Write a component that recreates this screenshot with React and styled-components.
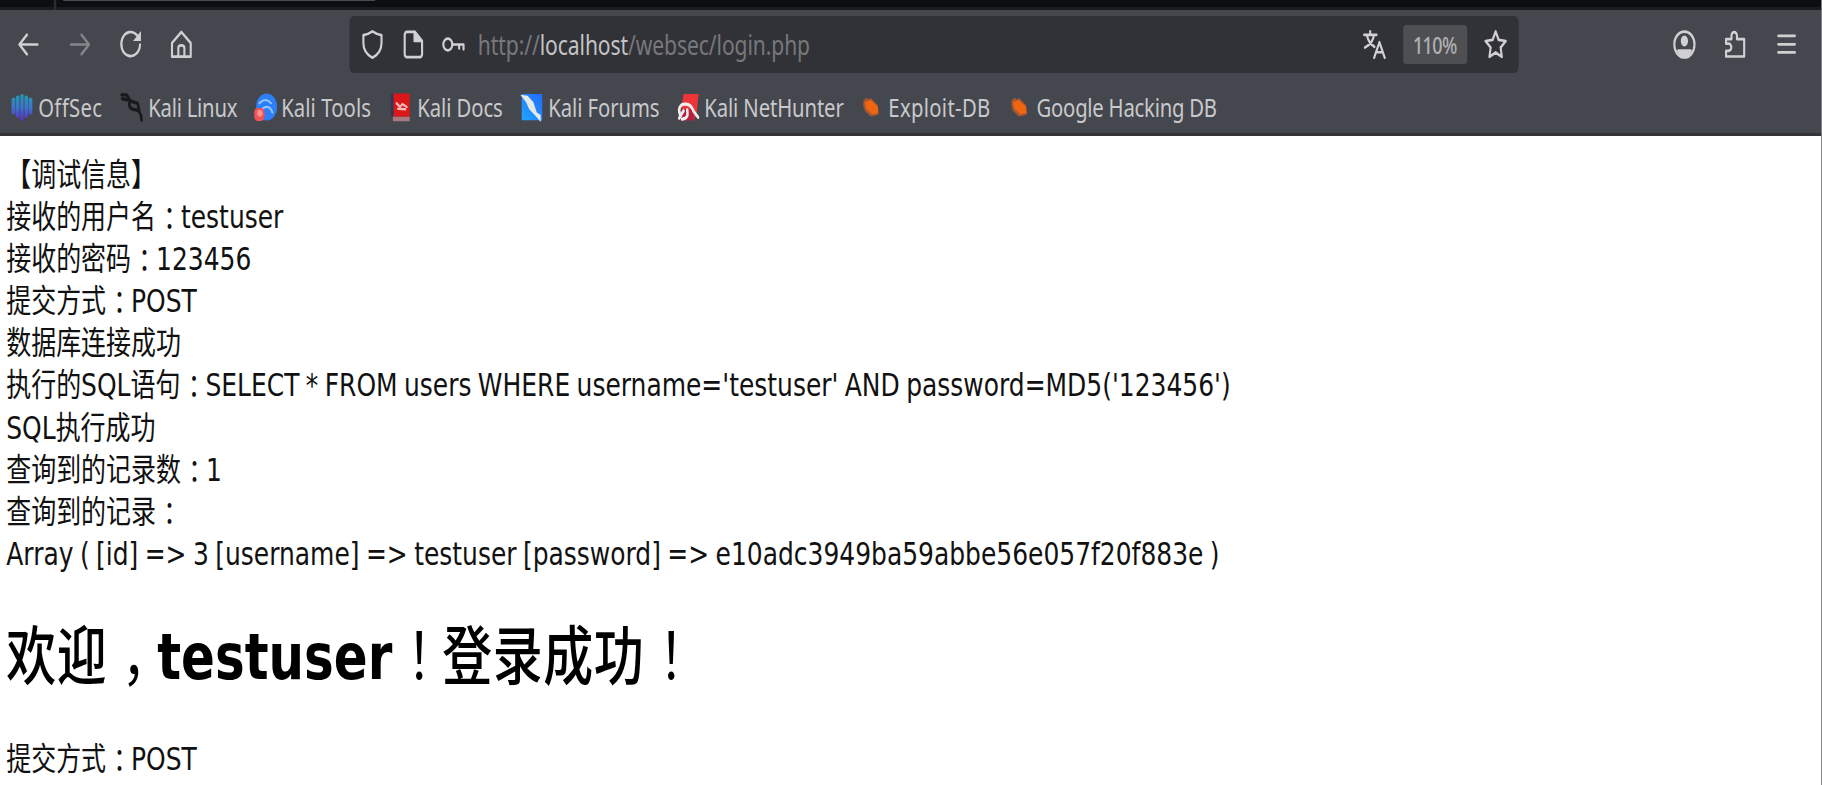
import { Fragment } from "react";
import styled, { createGlobalStyle } from "styled-components";

const GlobalStyle = createGlobalStyle`
  html,
  body {
    margin: 0;
    background: #fff;
    overflow: hidden;
  }
`;

// the whole window is laid out wide and condensed horizontally
const Window = styled.div`
  display: flex;
  flex-direction: column;
  box-sizing: border-box;
  width: 2336px;
  height: 785px;
  transform: scaleX(0.78);
  transform-origin: 0 0;
  background: #fff;
  border-right: 1px solid #55575d;
  overflow: hidden;
`;

const TabStrip = styled.div`
  display: flex;
  flex: none;
  box-sizing: border-box;
  height: 10px;
  background: #0d0e12;
  border-bottom: 3px solid #1a1b1e;
`;

const TabDivider = styled.div`
  width: 3px;
  height: 10px;
  margin-left: 69px;
  background: #2c2d32;
`;

const TabEdge = styled.div`
  width: 400px;
  height: 1px;
  margin-left: 9px;
  background: #484a51;
`;

const Chrome = styled.header`
  flex: none;
  box-sizing: border-box;
  height: 126px;
  background: #45474e;
  border-bottom: 3px solid #343338;
  color: #c9c9cb;
  font-family: "Noto Sans", sans-serif;
`;

const Toolbar = styled.div`
  display: flex;
  align-items: center;
  height: 57px;
  padding: 6px 12px 0 4px;
`;

const ToolButton = styled.div`
  display: flex;
  justify-content: center;
  align-items: center;
  width: ${(props) => props.$width || 65.4}px;
  color: ${(props) => (props.$dim ? "#85868b" : "#d0d0d2")};
`;

const UrlBar = styled.div`
  display: flex;
  align-items: center;
  box-sizing: border-box;
  width: 1499px;
  height: 57px;
  margin-left: 182px;
  padding: 0 3px 0 4px;
  border-radius: 6px;
  background: #313237;
`;

const Url = styled.div`
  flex: 1;
  margin-left: 5px;
  color: #77787c;
  font-size: 27px;
  line-height: 36px;
  letter-spacing: -0.1px;
  white-space: nowrap;

  b {
    color: #c4c4c6;
    font-weight: 400;
  }
`;

const ZoomBadge = styled.div`
  width: 82px;
  height: 39px;
  margin: 0 11px 0 10px;
  border-radius: 4px;
  background: #4e4f53;
  color: #b1b1b3;
  font-size: 23px;
  font-weight: 500;
  line-height: 40px;
  letter-spacing: -0.7px;
  text-align: center;
`;

const Menus = styled.div`
  display: flex;
  margin-left: auto;
`;

const Bookmarks = styled.nav`
  display: flex;
  align-items: center;
  height: 54px;
  margin-top: 7px;
  padding-left: 13px;
`;

const Bookmark = styled.div`
  display: flex;
  flex: none;
  align-items: center;
  gap: 6px;
  width: ${(props) => props.$width}px;
  font-size: 26px;
  line-height: 36px;
  letter-spacing: ${(props) => props.$spacing || 0}px;
  white-space: nowrap;
`;

const Page = styled.main`
  padding: 17.5px 8px 0;
  color: #111;
  font-family: "DejaVu Sans", "Noto Sans CJK SC", sans-serif;
  font-size: 32px;
  line-height: 42.2px;
  word-spacing: -1.95px;
`;

const Line = styled.div`
  height: 42.2px;
  white-space: nowrap;
`;

const Welcome = styled.h1`
  height: 80px;
  margin: 42px 0 41px;
  color: #000;
  font-size: 64px;
  font-weight: 500;
  line-height: 80px;
  letter-spacing: 0.8px;
  white-space: nowrap;

  b {
    font-weight: 700;
    letter-spacing: 0;
  }
`;

// full-width punctuation sits in the middle of its square
const Mark = styled.span`
  margin-left: 0.29em;
  font-family: "Noto Sans CJK SC", sans-serif;
  font-weight: 400;
  letter-spacing: -0.29em;
  line-height: 1;
`;

const Svg = styled.svg`
  display: block;
  flex: none;
  width: ${(props) => props.$size || 31}px;
  height: ${(props) => props.$size || 31}px;
  fill: none;
  stroke: currentColor;
  stroke-width: 1.4;
  stroke-linecap: round;
  stroke-linejoin: round;
`;

const icons = {
  back: <path d="M14 8H2.2M7 3 2 8l5 5" />,
  forward: <path d="M2 8h11.8M9 3l5 5-5 5" />,
  reload: (
    <>
      <path d="M12.2 3.2A6.2 6.2 0 1 0 14.2 8" />
      <path d="M14.8 1v5.2H9.6z" fill="currentColor" stroke="none" />
    </>
  ),
  home: (
    <>
      <path d="M1.8 7.2 8 1.5l6.2 5.7v7.1H1.8z" />
      <path d="M6 14V9.8Q6 8.5 8 8.5t2 1.3V14" />
    </>
  ),
  shield: <path d="M8 1.2q3 1.6 6 2v4c0 3.6-2.6 6.2-6 7.6-3.4-1.4-6-4-6-7.6v-4q3-.4 6-2z" />,
  page: (
    <>
      <path d="M4 1.5h5.3L14 6.2v6.8a1.5 1.5 0 0 1-1.5 1.5H4A1.5 1.5 0 0 1 2.5 13V3A1.5 1.5 0 0 1 4 1.5z" />
      <path d="M9 1.5v4.7h4.7z" fill="currentColor" />
    </>
  ),
  key: (
    <>
      <circle cx="4.2" cy="8" r="3" />
      <path d="M7.2 8h7.4v2.5M11.7 8v2" />
    </>
  ),
  translate: (
    <>
      <path d="M1 3h8.2M5 1.2V3M7.5 3C7 6.3 4.3 8.5 1.5 9.6M2.8 3c.6 3 2.6 5 5 6.2" />
      <path d="m7.6 14.8 3.5-8 3.5 8M8.8 12h4.6" />
    </>
  ),
  star: (
    <path d="m8 1.3 2 4.3 4.7.6-3.4 3.3.8 4.9L8 12.1l-4.1 2.3.8-4.9L1.3 6.2 6 5.6z" />
  ),
  account: (
    <>
      <circle cx="8" cy="8" r="6.7" />
      <ellipse cx="8" cy="6.2" rx="1.7" ry="2.1" fill="currentColor" />
      <path d="M3.8 11.2h8.4Q10.8 14 8 14t-4.2-2.8z" fill="currentColor" />
    </>
  ),
  extension: (
    <path d="M2 7V5.2h3.6V3.4a1.8 1.8 0 0 1 3.6 0v1.8H14v9H2v-2.9h1.6a1.8 1.8 0 0 0 0-3.8H2z" />
  ),
  menu: <path d="M2.5 3.5h11M2.5 7.9h11M2.5 12.1h11" />,
};

const favicons = {
  offsec: (
    <>
      <linearGradient id="offsec" x1="0" y1="1" x2="0" y2="15.5" gradientUnits="userSpaceOnUse">
        <stop offset="0" stopColor="#229db0" />
        <stop offset="0.5" stopColor="#3976d2" />
        <stop offset="1" stopColor="#6128c5" />
      </linearGradient>
      <g fill="url(#offsec)" stroke="none">
        <rect x="1" y="3" width="2.6" height="9" rx="1" />
        <rect x="4" y="1.8" width="2.4" height="12" rx="1" />
        <rect x="7" y="1" width="2.2" height="14.5" rx="1" />
        <rect x="9.8" y="1.8" width="2.4" height="12" rx="1" />
        <rect x="12.6" y="3" width="2.6" height="9" rx="1" />
      </g>
    </>
  ),
  kali: (
    <g stroke="#17191d" strokeWidth="1.8">
      <path d="M1 1.5h3.5L7 4.8l5 1.3 1 3.4M1.5 3.6l4.8.9M6.5 5c-.8 3 1 4.6 4 4.4 2.7.2 4 2.5 4.2 5.6" />
    </g>
  ),
  tools: (
    <g stroke="none">
      <circle cx="9" cy="8" r="7.2" fill="#2d7ff7" />
      <path d="M4 6c3-2.4 6-2 8 0M6 9c3-2 6-1 7 2" stroke="#8fc4ff" strokeWidth="1.2" fill="none" />
      <rect x="0.5" y="8.5" width="7" height="7" rx="2.5" fill="#f05258" />
      <circle cx="4.3" cy="11.3" r="1.8" fill="#ff9192" />
    </g>
  ),
  docs: (
    <g stroke="none">
      <path d="M1 1h3v12H1z" fill="#343655" />
      <path d="M3 .8h11v12.4H3z" fill="#dc1719" />
      <path d="M2.5 13.2H14v2.4H2.5z" fill="#a97980" />
      <path d="m5 6 2.4 2L9 6.4l3 1.6M6 9l5 .2" stroke="#ffb8b7" strokeWidth="1.3" fill="none" />
    </g>
  ),
  forums: (
    <g stroke="none">
      <linearGradient id="forums" x1="1" y1="0" x2="0" y2="1">
        <stop offset="0" stopColor="#216bff" />
        <stop offset="1" stopColor="#21a5ff" />
      </linearGradient>
      <path d="M1 1h14v14H1z" fill="url(#forums)" />
      <path d="M0 1.5 5 2l4 3.5 2.3 5.4 2.7 1.3V16l-4-3.6L6 9 4 5.5z" fill="#e6e8e6" />
    </g>
  ),
  nethunter: (
    <g stroke="none">
      <path d="M5 1h10.3L14 11l-2 4H3L4 6z" fill="#ed3439" />
      <path d="M4 9h8v6H2z" fill="#b81f3d" />
      <path d="M2.5 12C.8 8.5 3.5 6 6 6.5c3.5-.5 5 2 6 4l3 3M4 14.5c4-.5 4-2 3.5-5M2 14l3-4" stroke="#eee" strokeWidth="1.7" fill="none" />
    </g>
  ),
  exploit: (
    <g stroke="none">
      <path d="M2.2 4.5 4 3l2 1 1-1 5 4 .4 5-2 .5L7 13l-4-3-1-3z" fill="#a85631" />
      <path d="M3 5.5 7 4.3l5 3.5.3 3.4-4 .8-4.2-3z" fill="#ef6512" />
    </g>
  ),
};

const bookmarks = [
  { label: "OffSec", icon: "offsec", width: 141, spacing: 0.4 },
  { label: "Kali Linux", icon: "kali", width: 170.5, spacing: -0.3 },
  { label: "Kali Tools", icon: "tools", width: 174.4, spacing: 0.1 },
  { label: "Kali Docs", icon: "docs", width: 168, spacing: -0.1 },
  { label: "Kali Forums", icon: "forums", width: 200, spacing: -0.1 },
  { label: "Kali NetHunter", icon: "nethunter", width: 236, spacing: -0.15 },
  { label: "Exploit-DB", icon: "exploit", width: 190, spacing: 0.4 },
  { label: "Google Hacking DB", icon: "exploit", width: 280, spacing: -0.3 },
];

const lines = [
  "【调试信息】",
  "接收的用户名：testuser",
  "接收的密码：123456",
  "提交方式：POST",
  "数据库连接成功",
  "执行的SQL语句：SELECT * FROM users WHERE username='testuser' AND password=MD5('123456')",
  "SQL执行成功",
  "查询到的记录数：1",
  "查询到的记录：",
  "Array ( [id] => 3 [username] => testuser [password] => e10adc3949ba59abbe56e057f20f883e )",
];

function Icon({ name, dim, width }) {
  return (
    <ToolButton $dim={dim} $width={width}>
      <Svg viewBox="0 0 16 16">{icons[name]}</Svg>
    </ToolButton>
  );
}

function Text({ children }) {
  return children
    .split(/([：，！])/)
    .map((part, i) =>
      i % 2 ? <Mark key={i}>{part}</Mark> : <Fragment key={i}>{part}</Fragment>
    );
}

export default function App() {
  return (
    <>
      <GlobalStyle />
      <Window>
        <TabStrip>
          <TabDivider />
          <TabEdge />
        </TabStrip>
        <Chrome>
          <Toolbar>
            <Icon name="back" />
            <Icon name="forward" dim />
            <Icon name="reload" />
            <Icon name="home" />
            <UrlBar>
              <Icon name="shield" width={52} />
              <Icon name="page" width={52} />
              <Icon name="key" width={52} />
              <Url>
                http://<b>localhost</b>/websec/login.php
              </Url>
              <Icon name="translate" width={52} />
              <ZoomBadge>110%</ZoomBadge>
              <Icon name="star" width={52} />
            </UrlBar>
            <Menus>
              <Icon name="account" />
              <Icon name="extension" />
              <Icon name="menu" />
            </Menus>
          </Toolbar>
          <Bookmarks>
            {bookmarks.map((item) => (
              <Bookmark
                key={item.label}
                $width={item.width}
                $spacing={item.spacing}
              >
                <Svg viewBox="0 0 16 16" $size={30}>
                  {favicons[item.icon]}
                </Svg>
                {item.label}
              </Bookmark>
            ))}
          </Bookmarks>
        </Chrome>
        <Page>
          {lines.map((line) => (
            <Line key={line}>
              <Text>{line}</Text>
            </Line>
          ))}
          <Welcome>
            <Text>欢迎，</Text>
            <b>testuser</b>
            <Text>！登录成功！</Text>
          </Welcome>
          <Line>
            <Text>提交方式：POST</Text>
          </Line>
        </Page>
      </Window>
    </>
  );
}
